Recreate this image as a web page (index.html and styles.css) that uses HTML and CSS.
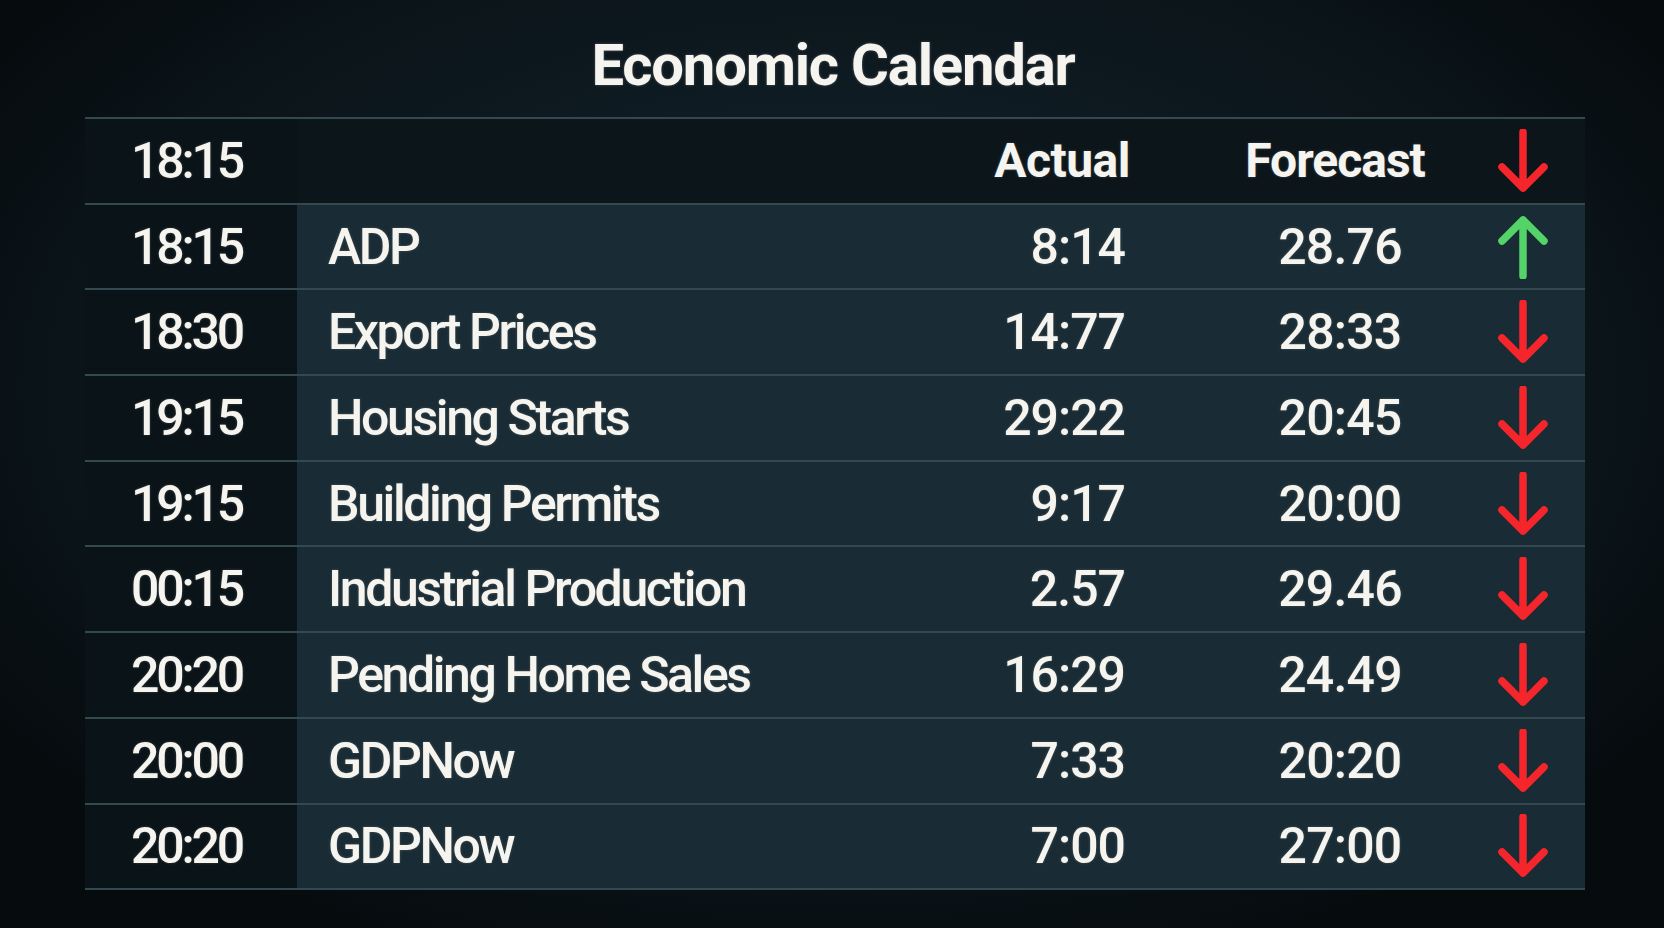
FILE: index.html
```html
<!DOCTYPE html>
<html lang="en">
<head>
<meta charset="utf-8">
<title>Economic Calendar</title>
<link rel="stylesheet" href="styles.css">
</head>
<body>
<div class="screen">
  <h1 class="title">Economic Calendar</h1>
  <div class="table">
    <div class="row head">
      <div class="time">18:15</div>
      <div class="name"></div>
      <div class="actual">Actual</div>
      <div class="forecast">Forecast</div>
      <div class="trend"><svg class="arrow down" viewBox="0 0 52 64"><path d="M26 3 V59 M5 38 L26 59 L47 38"/></svg></div>
    </div>
    <div class="row">
      <div class="time">18:15</div>
      <div class="name">ADP</div>
      <div class="actual">8:14</div>
      <div class="forecast">28.76</div>
      <div class="trend"><svg class="arrow up" viewBox="0 0 52 64"><path d="M26 61 V5 M5 26 L26 5 L47 26"/></svg></div>
    </div>
    <div class="row">
      <div class="time">18:30</div>
      <div class="name">Export Prices</div>
      <div class="actual">14:77</div>
      <div class="forecast">28:33</div>
      <div class="trend"><svg class="arrow down" viewBox="0 0 52 64"><path d="M26 3 V59 M5 38 L26 59 L47 38"/></svg></div>
    </div>
    <div class="row">
      <div class="time">19:15</div>
      <div class="name">Housing Starts</div>
      <div class="actual">29:22</div>
      <div class="forecast">20:45</div>
      <div class="trend"><svg class="arrow down" viewBox="0 0 52 64"><path d="M26 3 V59 M5 38 L26 59 L47 38"/></svg></div>
    </div>
    <div class="row">
      <div class="time">19:15</div>
      <div class="name">Building Permits</div>
      <div class="actual">9:17</div>
      <div class="forecast">20:00</div>
      <div class="trend"><svg class="arrow down" viewBox="0 0 52 64"><path d="M26 3 V59 M5 38 L26 59 L47 38"/></svg></div>
    </div>
    <div class="row">
      <div class="time">00:15</div>
      <div class="name">Industrial Production</div>
      <div class="actual">2.57</div>
      <div class="forecast">29.46</div>
      <div class="trend"><svg class="arrow down" viewBox="0 0 52 64"><path d="M26 3 V59 M5 38 L26 59 L47 38"/></svg></div>
    </div>
    <div class="row">
      <div class="time">20:20</div>
      <div class="name">Pending Home Sales</div>
      <div class="actual">16:29</div>
      <div class="forecast">24.49</div>
      <div class="trend"><svg class="arrow down" viewBox="0 0 52 64"><path d="M26 3 V59 M5 38 L26 59 L47 38"/></svg></div>
    </div>
    <div class="row">
      <div class="time">20:00</div>
      <div class="name">GDPNow</div>
      <div class="actual">7:33</div>
      <div class="forecast">20:20</div>
      <div class="trend"><svg class="arrow down" viewBox="0 0 52 64"><path d="M26 3 V59 M5 38 L26 59 L47 38"/></svg></div>
    </div>
    <div class="row last">
      <div class="time">20:20</div>
      <div class="name">GDPNow</div>
      <div class="actual">7:00</div>
      <div class="forecast">27:00</div>
      <div class="trend"><svg class="arrow down" viewBox="0 0 52 64"><path d="M26 3 V59 M5 38 L26 59 L47 38"/></svg></div>
    </div>
  </div>
</div>
</body>
</html>
```
FILE: styles.css
```css
html, body {
  margin: 0;
  padding: 0;
}
body {
  width: 1664px;
  height: 928px;
  overflow: hidden;
  background: radial-gradient(ellipse 60% 65% at 50% 42%, #15252d 0%, #0f1c23 45%, #0a1318 80%, #060b0e 100%);
  font-family: Roboto, "Liberation Sans", sans-serif;
  color: #f6f4ef;
}
.screen {
  padding-top: 36px;
}
.title {
  margin: 0 0 23px 0;
  font-size: 58px;
  line-height: 58px;
  font-weight: 700;
  letter-spacing: -1.2px;
  text-align: center;
  padding-left: 2px;
  text-shadow: 0 0 3px rgba(255, 255, 255, 0.25);
}
.table {
  margin-left: 85px;
  width: 1500px;
}
.row {
  display: grid;
  grid-template-columns: 212px 653px 180px 310px 145px;
  height: 83.7px;
  border-top: 2px solid #34494f;
  background: #192b34;
}
.row.last {
  border-bottom: 2px solid #34494f;
}
.row.head {
  background: #0b151a;
}
.row > div {
  display: flex;
  align-items: center;
  font-size: 50px;
  line-height: 50px;
  font-weight: 500;
  text-shadow: 0 0 3px rgba(255, 255, 255, 0.2);
}
.time {
  background: #0a1317;
  padding-left: 46px;
  letter-spacing: -3.2px;
}
.name {
  padding-left: 31px;
  letter-spacing: -2.4px;
}
.actual {
  justify-content: flex-end;
  padding-right: 5px;
  letter-spacing: -1px;
}
.forecast {
  justify-content: center;
  padding-left: 110px;
  letter-spacing: -0.8px;
}
.row.head .actual,
.row.head .forecast {
  font-weight: 700;
  font-size: 48px;
}
.row.head .actual {
  padding-right: 0;
  letter-spacing: -0.5px;
}
.row.head .forecast {
  letter-spacing: -1px;
  padding-left: 100px;
}
.trend {
  justify-content: center;
  padding-left: 20px;
}
.arrow {
  width: 52px;
  height: 64px;
  fill: none;
  stroke-width: 7.5;
  stroke-linecap: round;
  stroke-linejoin: round;
}
.arrow.down {
  stroke: #f5262b;
}
.arrow.up {
  stroke: #54d468;
}
```
